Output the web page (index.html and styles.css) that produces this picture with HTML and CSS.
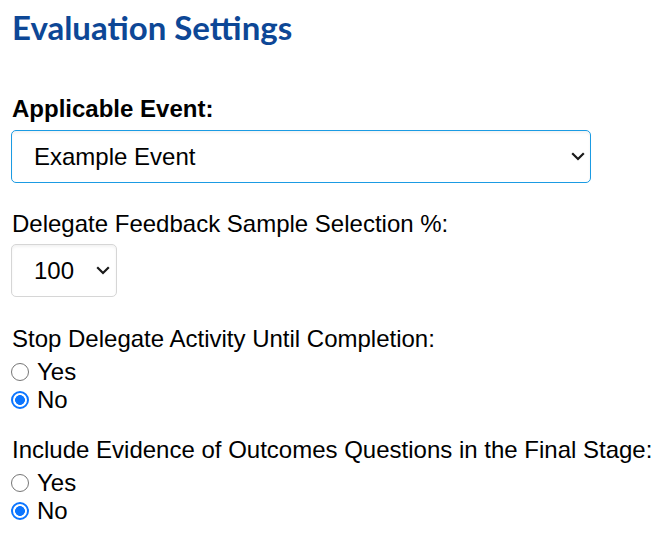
FILE: index.html
```html
<!DOCTYPE html>
<html lang="en">
<head>
<meta charset="utf-8">
<title>Evaluation Settings</title>
<link rel="stylesheet" href="styles.css">
</head>
<body>
<main class="page">
  <h1 class="title">Evaluation Settings</h1>

  <div class="field field-event">
    <label class="label strong" for="event">Applicable Event:</label>
    <div class="select-wrap wide">
      <select id="event" class="select focused">
        <option>Example Event</option>
      </select>
      <svg class="chev" viewBox="0 0 14 9" width="14" height="9"><path d="M1.2 1.2 7 7 12.8 1.2" fill="none" stroke="#1a1a1a" stroke-width="2.2"/></svg>
    </div>
  </div>

  <div class="field field-sample">
    <label class="label" for="sample">Delegate Feedback Sample Selection %:</label>
    <div class="select-wrap narrow">
      <select id="sample" class="select">
        <option>100</option>
      </select>
      <svg class="chev" viewBox="0 0 14 9" width="14" height="9"><path d="M1.2 1.2 7 7 12.8 1.2" fill="none" stroke="#1a1a1a" stroke-width="2.2"/></svg>
    </div>
  </div>

  <div class="field field-radio">
    <div class="label">Stop Delegate Activity Until Completion:</div>
    <label class="radio"><input type="radio" name="stop"><span>Yes</span></label>
    <label class="radio"><input type="radio" name="stop" checked><span>No</span></label>
  </div>

  <div class="field field-radio">
    <div class="label">Include Evidence of Outcomes Questions in the Final Stage:</div>
    <label class="radio"><input type="radio" name="include"><span>Yes</span></label>
    <label class="radio"><input type="radio" name="include" checked><span>No</span></label>
  </div>
</main>
</body>
</html>
```

FILE: styles.css
```css
html, body {
  margin: 0;
  padding: 0;
  background: #fff;
}
body {
  font-family: "Liberation Sans", Arial, sans-serif;
  font-size: 24px;
  color: #000;
}
.page {
  padding: 7px 12px 0 12px;
}
.title {
  font-family: Lato, "Open Sans", sans-serif;
  font-weight: 700;
  font-size: 33px;
  line-height: 40px;
  color: #0d4796;
  margin: 0;
}
.field {
  display: flex;
  flex-direction: column;
  align-items: flex-start;
}
.label {
  display: block;
  line-height: 28px;
}
.strong {
  font-weight: 700;
}
.field-event {
  margin-top: 48px;
}
.field-event .label {
  margin-bottom: 7px;
}
.field-sample {
  margin-top: 27px;
}
.field-sample .label {
  margin-bottom: 6px;
}
.field-radio {
  margin-top: 28px;
}
.field-radio .label {
  margin-bottom: 5px;
}
.field-radio + .field-radio {
  margin-top: 22px;
}
.select-wrap {
  position: relative;
  margin-left: -1px;
}
.select-wrap.wide {
  width: 580px;
}
.select-wrap.narrow {
  width: 106px;
}
.select {
  -webkit-appearance: none;
  appearance: none;
  box-sizing: border-box;
  width: 100%;
  height: 53px;
  margin: 0;
  border: 1px solid #d6d6d6;
  border-radius: 5px;
  background: #fff;
  font-family: inherit;
  font-size: 24px;
  color: #000;
  padding: 0 30px 0 22px;
  box-shadow: inset 0 2px 3px rgba(0, 0, 0, 0.05);
  outline: none;
}
.select.focused {
  border-color: #1b9be3;
}
.chev {
  position: absolute;
  right: 6px;
  top: 22px;
  pointer-events: none;
}
.narrow .chev {
  right: 7px;
}
.radio {
  display: flex;
  align-items: center;
  height: 28px;
  line-height: 28px;
}
.radio input {
  -webkit-appearance: none;
  appearance: none;
  box-sizing: border-box;
  width: 18px;
  height: 18px;
  margin: 0 8px 0 -1px;
  border: 1.5px solid #767676;
  border-radius: 50%;
  background: #fff;
  flex: none;
}
.radio input:checked {
  border: 2px solid #0b75ff;
  background: radial-gradient(circle, #0b75ff 0 4.6px, #fff 5.2px);
}
```
